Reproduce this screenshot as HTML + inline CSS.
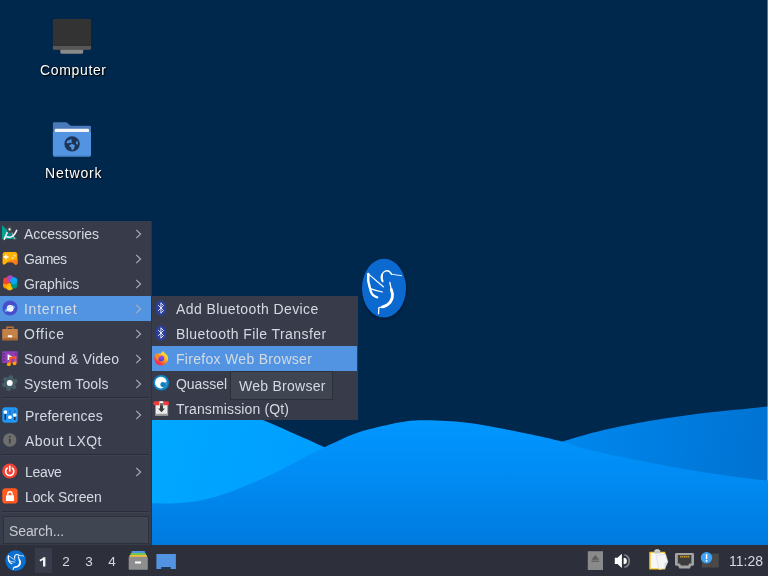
<!DOCTYPE html>
<html>
<head>
<meta charset="utf-8">
<title>Desktop</title>
<style>
*{margin:0;padding:0;box-sizing:border-box}
html,body{width:768px;height:576px;overflow:hidden;background:#00274c}
body{position:relative;font-family:"Liberation Sans",sans-serif;font-size:14px;color:#d3dae3}
#wall{position:absolute;left:0;top:0;width:768px;height:576px}
.dlabel{position:absolute;color:#fff;white-space:nowrap;text-shadow:1px 1px 1px #000,0 0 2px rgba(0,0,0,.55);font-size:14px;line-height:16px}
.dicon{position:absolute}
#menu{position:absolute;left:0;top:221px;width:152px;height:325px;background:#383c4a;border-right:1px solid #2f323e}
.mi{position:absolute;left:0;width:151px;height:25px;line-height:25px;white-space:nowrap}
.mi .t{position:absolute;left:24px;top:0;transform:translateY(0.7px)}
.mi svg.ic{position:absolute;left:1.75px;top:4px;width:16px;height:16px}
.mi svg.ar{position:absolute;left:134.7px;top:7.6px;width:7px;height:10px}
.hl{background:#5294e2}
.sep{position:absolute;left:2px;width:147px;height:2px;border-top:1px solid #2b2e39;border-bottom:1px solid #3f4351}
#sub{position:absolute;left:152px;top:296px;width:206px;height:124.4px;background:#383c4a;overflow:hidden}
#sub .mi{width:205px}
#sub .mi svg.ic{left:0.9px}
#tip{position:absolute;left:230.3px;top:371px;width:102.4px;height:29.4px;background:#404552;border:1px solid #2c2f3a;line-height:28px}
#tip span{position:absolute;left:7.5px;top:0;transform:translateY(0.3px);white-space:nowrap}
#search{position:absolute;left:3px;top:295px;width:146px;height:28.4px;background:#404552;border:1px solid #2e313c;line-height:25px;color:#c8ccd4}
#search span{position:absolute;left:5px;top:1px;transform:translateY(0.8px)}
#panel{position:absolute;left:0;top:545px;width:768px;height:31px;background:#2d303b}
#panel svg{position:absolute}
.pg{position:absolute;top:0;transform:translateY(1.2px);height:31px;line-height:31px;font-size:13.5px;text-align:center;width:20px;color:#d3dae3}
#clock{position:absolute;left:729px;top:0;transform:translateY(0.9px);height:31px;line-height:31px;font-size:14px;color:#d3dae3;white-space:nowrap}
.mi .t,.dlabel,#tip span,#search span,.pg,#clock{will-change:transform}
</style>
</head>
<body>
<svg id="wall" viewBox="0 0 768 576">
<defs>
<linearGradient id="gm" gradientUnits="userSpaceOnUse" x1="0" y1="420" x2="0" y2="546"><stop offset="0" stop-color="#0097ff"/><stop offset="0.5" stop-color="#008af2"/><stop offset="1" stop-color="#0079dd"/></linearGradient>
<linearGradient id="gl" gradientUnits="userSpaceOnUse" x1="150" y1="420" x2="330" y2="470"><stop offset="0" stop-color="#00a8ff"/><stop offset="1" stop-color="#009dff"/></linearGradient>
<linearGradient id="gr" gradientUnits="userSpaceOnUse" x1="562" y1="440" x2="768" y2="470"><stop offset="0" stop-color="#0088ee"/><stop offset="1" stop-color="#0072d2"/></linearGradient>
</defs>
<rect width="768" height="576" fill="#00274c"/>
<path d="M-10.0,350.0 C8.3,353.0 65.0,360.5 100.0,368.0 C135.0,375.5 172.7,386.2 200.0,395.0 C227.3,403.8 248.2,414.0 264.0,420.5 C279.8,427.0 284.9,429.6 295.0,434.0 C305.1,438.4 316.1,443.4 324.4,447.2 C332.7,451.0 341.6,455.4 345.0,457.0 L345,560 L-10,560Z" fill="url(#gl)"/>
<path d="M545.0,447.0 C547.8,446.1 555.9,443.6 561.8,441.8 C567.6,440.0 572.4,438.4 580.1,436.2 C587.8,434.0 598.8,431.0 608.2,428.9 C617.6,426.8 627.0,425.0 636.4,423.3 C645.8,421.6 655.1,419.9 664.5,418.5 C673.9,417.1 683.2,415.8 692.6,414.6 C702.0,413.4 711.3,412.2 720.7,411.2 C730.1,410.2 740.2,409.2 748.8,408.4 C757.3,407.6 768.1,406.6 772.0,406.2 L772,560 L545,560Z" fill="url(#gr)"/>
<rect x="767" y="0" width="1" height="483" fill="#fff" opacity="0.360"/>
<path d="M-10.0,512.0 C1.7,511.2 38.3,508.2 60.0,507.0 C81.7,505.8 104.7,505.1 120.0,504.5 C135.3,503.9 144.5,503.3 152.0,503.2 C159.5,503.1 159.5,503.7 165.0,503.6 C170.5,503.5 178.5,503.1 185.0,502.5 C191.5,501.9 196.5,501.6 204.0,499.8 C211.5,498.1 221.3,495.0 230.0,492.0 C238.7,489.0 247.3,485.4 256.0,481.6 C264.7,477.8 273.3,473.7 282.0,469.4 C290.7,465.1 300.9,459.3 308.0,455.6 C315.1,451.9 319.1,449.8 324.4,447.2 C329.7,444.6 335.4,442.1 340.0,440.0 C344.6,437.9 346.8,436.6 352.0,434.7 C357.2,432.8 362.6,430.9 371.0,428.8 C379.4,426.6 393.1,423.3 402.5,421.9 C411.9,420.5 417.1,420.2 427.5,420.3 C437.9,420.4 453.6,421.3 465.0,422.5 C476.4,423.7 485.6,425.6 496.0,427.5 C506.4,429.4 517.0,431.5 527.5,433.8 C538.0,436.0 550.0,438.5 558.8,440.8 C567.5,443.1 571.9,445.3 580.1,447.5 C588.3,449.7 598.8,452.1 608.2,454.2 C617.6,456.3 627.0,458.2 636.4,460.1 C645.8,462.0 655.1,463.8 664.5,465.5 C673.9,467.2 683.2,469.0 692.6,470.5 C702.0,472.0 711.3,473.4 720.7,474.7 C730.1,476.0 740.2,477.3 748.8,478.4 C757.3,479.4 768.1,480.6 772.0,481.0 L772,560 L-10,560Z" fill="url(#gm)"/>
</svg>
<svg class="dicon" style="left:52px;top:18px;width:40px;height:37px" viewBox="0 0 40 37"><rect x="0.900" y="1.100" width="38.100" height="30.600" rx="1.300" fill="#333"/><path d="M0.900,28.100 h38.100 v2.300 a1.300,1.300 0 0 1 -1.300,1.300 h-35.500 a1.300,1.300 0 0 1 -1.300,-1.300z" fill="#575757"/><path d="M8.300,31.700 h22.900 v2.600 a1.500,1.500 0 0 1 -1.500,1.500 h-19.900 a1.500,1.500 0 0 1 -1.500,-1.500z" fill="#8a8a8a"/></svg>
<div class="dlabel" style="left:40px;top:62px;letter-spacing:0.650px">Computer</div>
<svg class="dicon" style="left:52px;top:121px;width:40px;height:37px" viewBox="0 0 40 37"><path d="M0.900,2.400 a1.200,1.200 0 0 1 1.200,-1.200 h12.200 l4.500,3.500 h19 a1.200,1.200 0 0 1 1.200,1.200 v28 h-38.100z" fill="#4979bb"/><rect x="2.700" y="7.700" width="34.400" height="6" rx="1.200" fill="#f3f3f3"/><path d="M0.900,10.900 h38.100 v23.200 a1.300,1.300 0 0 1 -1.300,1.300 h-35.500 a1.300,1.300 0 0 1 -1.300,-1.300z" fill="#5294e2"/><path d="M0.900,33.900 h38.100 v0.200 a1.300,1.300 0 0 1 -1.300,1.300 h-35.500 a1.300,1.300 0 0 1 -1.300,-1.300z" fill="#4b88d0"/><circle cx="20.100" cy="22.900" r="7.700" fill="#1c3557"/><g fill="#5294e2"><path d="M19.200,17.400 L17.700,18.900 L15.500,19.600 L14.400,21.800 L16.200,22.500 L18.100,21.500 L19.900,22.200 L19.500,19.600Z"/><path d="M17.700,24 L19.900,22.900 L22.800,24 L22.500,26.200 L21,29.100 L19.500,28.800 L19.200,26.200 L17.300,25.500Z"/><path d="M25,19.600 L26.100,21.800 L25.400,24 L23.900,22.500 L24.300,20.700Z"/></g></svg>
<div class="dlabel" style="left:44.500px;top:165px;letter-spacing:0.880px">Network</div>
<svg class="dicon" style="left:356px;top:252px;width:56px;height:72px" viewBox="356 252 56 72"><defs><filter id="ls" x="-20%" y="-20%" width="140%" height="140%"><feGaussianBlur stdDeviation="1.300"/></filter></defs><ellipse cx="384.300" cy="289.500" rx="22.300" ry="29.600" fill="#00152e" opacity="0.600" filter="url(#ls)"/><ellipse cx="384" cy="288.200" rx="22" ry="29.400" fill="#0b69cf"/><g fill="none" stroke="#fff" stroke-linecap="round" stroke-linejoin="round"><path d="M401.500,275.700 L391.500,274.200" stroke-width="0.900"/><path d="M391.500,274.200 C390.300,272 388.800,270.800 387.200,270.800 C384.300,270.800 382,273.300 381.600,276.400 C381.400,278.300 381.900,280 382.800,281.600" stroke-width="1.500"/><path d="M382.300,280.500 C381.500,278.500 381.400,276.500 382,274.800" stroke-width="2.100"/><path d="M389.800,282.500 C390.300,284.500 390.700,286.500 391.100,288.600 C391.700,290.600 392.400,292.500 392.400,294.600 C392.500,297 392.100,299 391.100,300.700 C390.200,302.500 388.900,304 387.200,305.100 C385.600,306.200 383.800,306.900 382,307.200 L378.900,307.700 L378.500,313.700" stroke-width="1.300"/><path d="M391.300,289.500 C392.300,292 392.800,295 392.200,297.800 C391.500,301 389.500,303.500 387,305.100 C385.500,306 384,306.600 382.500,306.900" stroke-width="2.900"/><path d="M368.300,273.900 C367.800,278.500 368.300,283.500 369.800,287.700" stroke-width="2.500"/><path d="M368.300,273.900 L383.300,286.800" stroke-width="1.150"/><path d="M370.200,288.700 C370.400,291 371.200,293 372.400,294.600 C373.600,296 375.300,297 377.200,297.300" stroke-width="2.300"/><path d="M370.200,288.700 C374,290.200 378,291.200 382.400,292" stroke-width="1.250"/></g></svg>
<div id="menu">
<div class="mi" style="top:0px"><svg class="ic" viewBox="0 0 16 16"><path d="M0,0.300 L0,14.100 L15,14.100Z" fill="#00a193"/><path d="M5.300,8 L7.500,7 L9.700,8 L10.600,10.500 L7.400,12.200 L4.300,11Z" fill="#007d8f" opacity="0.700"/><path d="M9.800,7.400 L12.900,14.500" stroke="#a3a3a3" stroke-width="1.100" fill="none"/><path d="M5.200,7.400 L2.300,14.300" stroke="#ededf2" stroke-width="1.600" fill="none" stroke-linecap="round"/><path d="M7.500,-0.600 L8.600,1.700 L9.900,2.700 L9.900,6.300 L8.800,7.800 L6.200,7.800 L5.100,6.300 L5.100,2.700 L6.400,1.700Z" fill="#494949"/><circle cx="7.550" cy="4.400" r="1.150" fill="#fff"/><path d="M3.300,12.200 C4.800,11 6,12 7.400,12.200 C9.500,12.400 11.500,10.800 12.500,9.300 C13.500,7.800 14.200,6.600 14.700,5.400" fill="none" stroke="#f1f1f5" stroke-width="1.600" stroke-linecap="round"/></svg><span class="t" style="letter-spacing:-0.05px;left:24px;">Accessories</span><svg class="ar" viewBox="0 0 7 10"><path d="M1.200,0.800 L5.600,5 L1.200,9.200" fill="none" stroke="#a9adb8" stroke-width="1.150"/></svg></div>
<div class="mi" style="top:25px"><svg class="ic" viewBox="0 0 16 16"><path d="M3,2 L13,2 C14.500,2 15.300,3 15.300,4.500 L15.500,12.500 C15.500,14.500 14,15.200 12.800,14.200 L10.500,12.200 L5.500,12.200 L3.200,14.200 C2,15.200 0.500,14.500 0.500,12.500 L0.700,4.500 C0.700,3 1.500,2 3,2Z" fill="#ffb300"/><path d="M15.400,9 L15.500,12.500 C15.500,14.500 14,15.200 12.800,14.200 L10.500,12.200 L5.500,12.200 L7.500,10.500 C10,10.500 13,10.300 15.400,9Z" fill="#ff7a1a"/><path d="M3.300,4.500h1.400v1.800h1.800v1.400h-1.800v1.800h-1.400v-1.800h-1.800v-1.400h1.800z" fill="#fff"/><circle cx="12.600" cy="5.700" r="0.900" fill="#ffe0c0"/><circle cx="10.500" cy="7.800" r="0.900" fill="#ffe0c0"/></svg><span class="t" style="letter-spacing:-0.5px;left:24px;">Games</span><svg class="ar" viewBox="0 0 7 10"><path d="M1.200,0.800 L5.600,5 L1.200,9.200" fill="none" stroke="#a9adb8" stroke-width="1.150"/></svg></div>
<div class="mi" style="top:50px"><svg class="ic" viewBox="0 0 16 16"><circle cx="4.500" cy="10.200" r="3.400" fill="#ff9800"/><circle cx="4.500" cy="5.800" r="3.400" fill="#f44336"/><circle cx="8.200" cy="3.700" r="3.400" fill="#ab47bc"/><circle cx="7.700" cy="12.100" r="3.300" fill="#ffc107"/><circle cx="12" cy="10" r="3.400" fill="#009688"/><circle cx="11.900" cy="5.800" r="3.500" fill="#03a9f4"/><path d="M8.200,7.800 L4.800,9.300 L5,11.500 L9,11Z" fill="#ffb300"/><path d="M8.200,7.800 L9,11 L10.500,12.500 L8.500,12.500Z" fill="#ffc107"/></svg><span class="t" style="letter-spacing:-0.1px;left:24px;">Graphics</span><svg class="ar" viewBox="0 0 7 10"><path d="M1.200,0.800 L5.600,5 L1.200,9.200" fill="none" stroke="#a9adb8" stroke-width="1.150"/></svg></div>
<div class="mi hl" style="top:75px"><svg class="ic" viewBox="0 0 16 16"><circle cx="8" cy="8" r="7.600" fill="#4650cc"/><g transform="rotate(-24 7.800 8.500)"><ellipse cx="7.800" cy="8.500" rx="5.700" ry="1.900" fill="#42a5f5"/></g><circle cx="8.200" cy="8.400" r="3.300" fill="#fff"/><g transform="rotate(-24 7.800 8.500)"><path d="M2.100,8.500 A5.700,1.900 0 0 0 13.500,8.500 A5.700,0.800 0 0 1 2.100,8.500Z" fill="#d6ebff"/><path d="M4.600,7.400 A5.700,1.900 0 0 1 11,7.400" fill="none" stroke="#90caf9" stroke-width="0.700"/></g></svg><span class="t" style="letter-spacing:0.73px;left:24px;">Internet</span><svg class="ar" viewBox="0 0 7 10"><path d="M1.200,0.800 L5.600,5 L1.200,9.200" fill="none" stroke="#a9adb8" stroke-width="1.150"/></svg></div>
<div class="mi" style="top:100px"><svg class="ic" viewBox="0 0 16 16"><path d="M4.200,4.500 L4.200,1.500 L11.800,1.500 L11.800,4.500 L10.300,4.500 L10.300,3 L5.700,3 L5.700,4.500Z" fill="#b8733a"/><rect x="0.200" y="4" width="15.600" height="11.200" rx="0.600" fill="#c58246"/><rect x="0.200" y="13.200" width="15.600" height="2" fill="#a8672c"/><rect x="5.800" y="10.200" width="4.400" height="2" rx="0.400" fill="#fff"/></svg><span class="t" style="letter-spacing:0.74px;left:24.1px;">Office</span><svg class="ar" viewBox="0 0 7 10"><path d="M1.200,0.800 L5.600,5 L1.200,9.200" fill="none" stroke="#a9adb8" stroke-width="1.150"/></svg></div>
<div class="mi" style="top:125px"><svg class="ic" viewBox="0 0 16 16"><rect x="0.200" y="1.200" width="15.400" height="11.800" rx="0.500" fill="#8e3fb8"/><g fill="#6a2f92"><rect x="1.200" y="3" width="1.600" height="2"/><rect x="1.200" y="6" width="1.600" height="2"/><rect x="1.200" y="9" width="1.600" height="2"/><rect x="13" y="3" width="1.600" height="2"/></g><path d="M5.600,4 L5.600,10.500 L11,7.200Z" fill="#fff"/><path d="M7.200,7 L14.300,6 L14.300,13.500 L12.700,13.500 L12.700,8.500 L8.800,9.100 L8.800,14.500 L7.200,14.500Z" fill="#ff5722"/><circle cx="6.800" cy="14.200" r="1.900" fill="#ffa000"/><circle cx="12.500" cy="13.300" r="1.900" fill="#ffa000"/></svg><span class="t" style="letter-spacing:0.15px;left:24.3px;">Sound &amp; Video</span><svg class="ar" viewBox="0 0 7 10"><path d="M1.200,0.800 L5.600,5 L1.200,9.200" fill="none" stroke="#a9adb8" stroke-width="1.150"/></svg></div>
<div class="mi" style="top:150px"><svg class="ic" viewBox="0 0 16 16"><g transform="translate(7.750,8.050) rotate(11)" fill="#465c66"><circle r="5.700"/><rect x="-2.200" y="-7.800" width="4.400" height="4.500" rx="1.300" transform="rotate(0)"/><rect x="-2.200" y="-7.800" width="4.400" height="4.500" rx="1.300" transform="rotate(60)"/><rect x="-2.200" y="-7.800" width="4.400" height="4.500" rx="1.300" transform="rotate(120)"/><rect x="-2.200" y="-7.800" width="4.400" height="4.500" rx="1.300" transform="rotate(180)"/><rect x="-2.200" y="-7.800" width="4.400" height="4.500" rx="1.300" transform="rotate(240)"/><rect x="-2.200" y="-7.800" width="4.400" height="4.500" rx="1.300" transform="rotate(300)"/></g><circle cx="7.750" cy="8.050" r="2.950" fill="#fff"/></svg><span class="t" style="letter-spacing:0.14px;left:24.3px;">System Tools</span><svg class="ar" viewBox="0 0 7 10"><path d="M1.200,0.800 L5.600,5 L1.200,9.200" fill="none" stroke="#a9adb8" stroke-width="1.150"/></svg></div>
<div class="sep" style="top:176px"></div>
<div class="mi" style="top:181.8px"><svg class="ic" viewBox="0 0 16 16" style="top:3.900px"><g transform="translate(0.050,0)"><rect x="0.200" y="0.200" width="15.500" height="15.500" rx="3.200" fill="#2196f3"/><g stroke="#1769c4" stroke-width="1.200"><path d="M3.300,3 V13"/><path d="M8,3 V13"/><path d="M12.700,3 V13"/></g><g stroke="#1c2a3a" stroke-width="1.300"><path d="M3.300,6.500 V13"/><path d="M12.700,9.500 V13"/></g><circle cx="3.300" cy="5.100" r="1.850" fill="#fff"/><circle cx="7.900" cy="10.200" r="1.850" fill="#fff"/><circle cx="12.700" cy="8" r="1.850" fill="#fff"/></g></svg><span class="t" style="letter-spacing:0.23px;left:24.5px;">Preferences</span><svg class="ar" viewBox="0 0 7 10"><path d="M1.200,0.800 L5.600,5 L1.200,9.200" fill="none" stroke="#a9adb8" stroke-width="1.150"/></svg></div>
<div class="mi" style="top:207.2px"><svg class="ic" viewBox="0 0 16 16"><circle cx="7.750" cy="8" r="6.700" fill="#6e6e6e"/><circle cx="7.750" cy="4.800" r="1" fill="#3a3d4a"/><rect x="6.950" y="6.800" width="1.600" height="4.800" rx="0.500" fill="#3a3d4a"/></svg><span class="t" style="letter-spacing:0.45px;left:24.5px;">About LXQt</span></div>
<div class="sep" style="top:233px"></div>
<div class="mi" style="top:238px"><svg class="ic" viewBox="0 0 16 16" style="top:4.400px"><circle cx="7.750" cy="8" r="7.600" fill="#f44336"/><path d="M5.150,5.200 A4.100,4.100 0 1 0 10.350,5.200" fill="none" stroke="#fff" stroke-width="1.600" stroke-linecap="round"/><path d="M7.750,3.200 V8" stroke="#fff" stroke-width="1.600" stroke-linecap="round"/></svg><span class="t" style="letter-spacing:-0.32px;left:24.5px;">Leave</span><svg class="ar" viewBox="0 0 7 10"><path d="M1.200,0.800 L5.600,5 L1.200,9.200" fill="none" stroke="#a9adb8" stroke-width="1.150"/></svg></div>
<div class="mi" style="top:263px"><svg class="ic" viewBox="0 0 16 16" style="top:4.100px"><rect x="0.250" y="0.200" width="15.400" height="15.400" rx="3.400" fill="#ff5a1f"/><path d="M5.750,7.500 V6 A2.200,2.200 0 0 1 10.150,6 V7.500" fill="none" stroke="#fff" stroke-width="1.400"/><rect x="3.950" y="7.200" width="8" height="5.800" rx="0.500" fill="#fff"/></svg><span class="t" style="letter-spacing:-0.1px;left:24.5px;">Lock Screen</span></div>
<div class="sep" style="top:290px"></div>
<div id="search"><span style="letter-spacing:-0.1px">Search...</span></div>
</div>
<div id="sub">
<div class="mi" style="top:0px"><svg class="ic" viewBox="0 0 16 16"><ellipse cx="8" cy="8" rx="5.400" ry="7.700" fill="#2c3e9e"/><path d="M5.100,5.100 L10.500,10.500 L7.900,13.200 L7.900,2.800 L10.500,5.500 L5.100,10.900" fill="none" stroke="#fff" stroke-width="0.850"/></svg><span class="t" style="letter-spacing:0.4px;left:23.8px;">Add Bluetooth Device</span></div>
<div class="mi" style="top:25px"><svg class="ic" viewBox="0 0 16 16"><ellipse cx="8" cy="8" rx="5.400" ry="7.700" fill="#2c3e9e"/><path d="M5.100,5.100 L10.500,10.500 L7.900,13.200 L7.900,2.800 L10.500,5.500 L5.100,10.900" fill="none" stroke="#fff" stroke-width="0.850"/></svg><span class="t" style="letter-spacing:0.42px;left:24.2px;">Bluetooth File Transfer</span></div>
<div class="mi hl" style="top:50px"><svg class="ic" viewBox="0 0 16 16"><defs><linearGradient id="ffg" gradientUnits="userSpaceOnUse" x1="13.500" y1="2" x2="4" y2="14.500"><stop offset="0" stop-color="#ffe53b"/><stop offset="0.350" stop-color="#ffc52e"/><stop offset="0.600" stop-color="#ff7a1f"/><stop offset="0.850" stop-color="#ff3344"/><stop offset="1" stop-color="#f5264f"/></linearGradient><linearGradient id="ffp" x1="0" y1="0" x2="0" y2="1"><stop offset="0" stop-color="#a04cf0"/><stop offset="1" stop-color="#4a44d6"/></linearGradient></defs><path d="M10.200,0.900 C10.600,2.300 12,3 13.200,4.300 C14.600,5.700 15.200,7.200 15.100,9 A6.900,6.500 0 0 1 1.300,8.800 C1.200,6.500 1.900,4.800 3.300,3.400 C3.400,4.100 3.600,4.400 4,4.700 C5,3.600 6.500,3.400 7.800,3.700 C8.200,2.500 9.200,1.500 10.200,0.900Z" fill="url(#ffg)"/><circle cx="8.300" cy="8.400" r="2.900" fill="url(#ffp)"/><path d="M3.200,3.600 C4.500,4 6.500,4.600 8,6.300 C7,6.600 6,7 5.300,8 C4.700,9 5,10.200 5.600,11 C4,10.500 2.500,8.500 2.600,6.500 C2.600,5.300 2.800,4.400 3.200,3.600Z" fill="#ff8a1f"/><path d="M11,6 C12.300,7 12.600,9 11.800,10.500 C11,12 9.300,12.700 7.800,12.300 C9.500,12 10.600,11 10.900,9.500 C11.200,8.200 10.800,7 11,6Z" fill="#ff9a22" opacity="0.850"/></svg><span class="t" style="letter-spacing:0.3px;left:24.2px;">Firefox Web Browser</span></div>
<div class="mi" style="top:75px"><svg class="ic" viewBox="0 0 16 16"><circle cx="8.200" cy="7.800" r="7.800" fill="#0c85c9"/><circle cx="7.900" cy="7.600" r="5.900" fill="#fff"/><path d="M13.700,6.500 A5.900,5.900 0 0 1 8.500,13.500 C11,12.500 12.500,10 12.200,7.500Z" fill="#0c85c9"/><circle cx="9.900" cy="9.500" r="2.500" fill="#0c7fc2"/></svg><span class="t" style="letter-spacing:-0.05px;left:24px;">Quassel</span></div>
<div class="mi" style="top:100px"><svg class="ic" viewBox="0 0 16 16"><rect x="2.400" y="3.300" width="12.400" height="12.300" fill="#ececec" stroke="#8c8c8c" stroke-width="0.800"/><rect x="2.800" y="13.800" width="11.600" height="1.500" fill="#9c9c9c"/><rect x="0.300" y="1.200" width="15.900" height="4" rx="2" fill="#ee3b3b"/><rect x="6.400" y="1.200" width="3.800" height="4" fill="#f4f4f4"/><path d="M7,3.200 H10 V8.600 H11.900 L8.500,12.300 L5.100,8.600 H7Z" fill="#3c3c3c"/><rect x="7" y="3.200" width="3" height="2.500" fill="#8a8a8a" opacity="0.600"/></svg><span class="t" style="letter-spacing:0.14px;left:24px;">Transmission (Qt)</span></div>
</div>
<div id="tip"><span style="letter-spacing:0.27px">Web Browser</span></div>
<div id="panel">
<svg style="left:4px;top:4px;width:24px;height:24px" viewBox="4 549 24 24"><circle cx="15.600" cy="560.600" r="10.300" fill="#0c6fd2"/><g transform="translate(15.600,560.600) scale(0.468,0.350) translate(-384,-288.200)" fill="none" stroke="#fff" stroke-linecap="round" stroke-linejoin="round"><path d="M401.200,275.100 L391.600,273.800" stroke-width="1.800"/><path d="M391.600,273.800 C390,271.500 388,270.600 386.400,270.800 C383.800,271.200 382.300,273.500 382,276 C381.800,278 381.800,279.500 382.200,281.500" stroke-width="2.400"/><path d="M389.700,277.200 C390.500,281 392,285 393,289 C394.200,294 393.500,299 391,302.500 C388.500,305.500 384.500,306.800 380.500,307 L378.900,313" stroke-width="2.600"/><path d="M392.200,286 C394,292 393.800,298 391,302.300 C389,305 386,306.200 383,306.600" stroke-width="3.600"/><path d="M368.600,274.200 C368,279 368.300,284 369.300,288 C370.500,292.500 372.800,295.800 376,297.200" stroke-width="3"/><path d="M368.600,274.200 C373,278 378.500,283 383.200,287" stroke-width="1.800"/><path d="M369.700,288.300 C373,290.500 378,291.800 382.200,292.600" stroke-width="1.900"/></g></svg>
<div style="position:absolute;left:35px;top:3px;width:17px;height:25px;background:#383c4a"></div>
<svg style="left:35px;top:3px;width:17px;height:25px" viewBox="35 548 17 25"><path d="M45.400,557.300 H43.400 C42.500,558.400 41,559.300 39.500,559.800 L40.100,561.500 C41.200,561.200 42.300,560.700 43,560.100 V566.400 H45.400Z" fill="#f2f3f5"/></svg>
<div class="pg" style="left:56px">2</div>
<div class="pg" style="left:79px">3</div>
<div class="pg" style="left:102px">4</div>
<svg style="left:128px;top:5px;width:21px;height:21px" viewBox="0 0 21 21"><rect x="3.500" y="1" width="13.500" height="3" rx="0.800" fill="#5294e2"/><rect x="2.500" y="3" width="15.500" height="3" rx="0.800" fill="#6bc950"/><rect x="1.500" y="5" width="17.500" height="3" rx="0.800" fill="#f4be3d"/><rect x="0.700" y="6.800" width="19.100" height="13" rx="0.700" fill="#8e8e8e"/><rect x="7" y="11.500" width="6" height="2" rx="0.500" fill="#fff"/></svg>
<svg style="left:156px;top:8px;width:21px;height:17px" viewBox="0 0 21 17"><path d="M0.400,1 H19.900 V16 H14.500 V14 H5.500 V16 H0.400Z" fill="#5294e2"/><rect x="5.500" y="14" width="9" height="2" fill="#1f3a5c"/></svg>
<svg style="left:587px;top:6px;width:17px;height:20px" viewBox="0 0 17 20"><rect x="0.800" y="0.200" width="15.200" height="18.800" fill="#8a8a8a"/><path d="M8.300,4 L12.200,8.800 H4.400Z" fill="#5c5c5c"/><rect x="4.400" y="9.600" width="7.800" height="1.200" fill="#5c5c5c"/></svg>
<svg style="left:613px;top:7px;width:20px;height:18px" viewBox="0 0 20 18"><path d="M1.800,5.800 H4.500 L8.900,1.800 V16 L4.500,12 H1.800Z" fill="#fff"/><path d="M10.600,5.700 A3.300,3.300 0 0 1 10.600,12.300Z" fill="#fff"/><path d="M11.300,2.700 A6.500,6.500 0 0 1 11.300,15.300" fill="none" stroke="#7f838e" stroke-width="1.700"/></svg>
<svg style="left:648px;top:3.200px;width:22px;height:23px" viewBox="0 0 22 23"><rect x="1.200" y="3.800" width="16.200" height="17.800" rx="0.900" fill="#f5c211"/><rect x="2.600" y="4.800" width="14" height="15.600" fill="#f6f6f6"/><rect x="6.300" y="2" width="5.900" height="3.600" rx="0.600" fill="#c4c4c4"/><rect x="7.300" y="1.200" width="3.800" height="1.600" rx="0.600" fill="#d6d6d6"/><path d="M8,7.700 L17.600,6.100 L19.900,13.700 L16.800,20.300 L11.100,21.600Z" fill="#f5f5f5" stroke="#cfcfcf" stroke-width="0.500"/><path d="M19.900,13.700 L16.300,15.200 L16.800,20.300Z" fill="#dcdcdc"/></svg>
<svg style="left:674px;top:7px;width:21px;height:17px" viewBox="0 0 21 17"><path d="M2.300,1.100 H18.700 A1.300,1.300 0 0 1 20,2.400 V12.500 A1.300,1.300 0 0 1 18.700,13.800 H17.200 L15.800,16.500 H5.400 L4,13.800 H2.300 A1.300,1.300 0 0 1 1,12.500 V2.400 A1.300,1.300 0 0 1 2.300,1.100Z" fill="#a3a3a3"/><path d="M3.800,2.900 H17.400 V11.400 H15.200 L14.300,13.600 H6.900 L6,11.400 H3.800Z" fill="#3d3d3d"/><rect x="6" y="3.800" width="9.300" height="1.700" fill="#c9962a"/><g fill="#3d3d3d"><rect x="7.600" y="3.800" width="0.500" height="1.700"/><rect x="9.500" y="3.800" width="0.500" height="1.700"/><rect x="11.400" y="3.800" width="0.500" height="1.700"/><rect x="13.300" y="3.800" width="0.500" height="1.700"/></g></svg>
<svg style="left:700px;top:6px;width:21px;height:18px" viewBox="0 0 21 18"><path d="M1.800,2.800 H18.800 V16.400 H14.200 L13.400,17.500 L12.600,16.400 H1.800Z" fill="#494949"/><circle cx="6.500" cy="6.800" r="5.700" fill="#3fa2f4"/><rect x="5.800" y="3" width="1.500" height="5" rx="0.500" fill="#fff"/><circle cx="6.550" cy="9.800" r="0.950" fill="#fff"/></svg>
<div id="clock">11:28</div>
</div>
</body>
</html>
